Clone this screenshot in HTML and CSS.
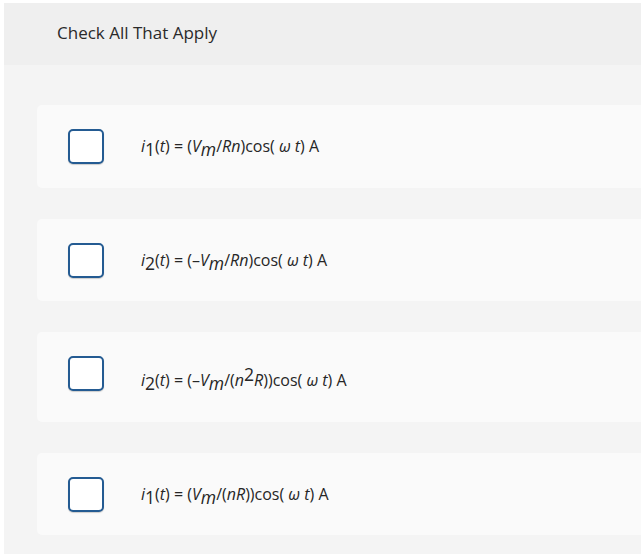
FILE: index.html
```html
<!DOCTYPE html>
<html lang="en">
<head>
<meta charset="utf-8">
<title>Check All That Apply</title>
<link rel="stylesheet" href="styles.css">
</head>
<body>
<div class="question">
  <div class="prompt">Check All That Apply</div>
  <div class="choices">
    <label class="choice">
      <span class="box"></span>
      <span class="expr"><i>i</i><span class="sub">1</span>(<i>t</i>) = (<i>V</i><span class="sub"><i>m</i></span>/<i>Rn</i>)cos( <i>ω</i> <i>t</i>) A</span>
    </label>
    <label class="choice">
      <span class="box"></span>
      <span class="expr"><i>i</i><span class="sub">2</span>(<i>t</i>) = (–<i>V</i><span class="sub"><i>m</i></span>/<i>Rn</i>)cos( <i>ω</i> <i>t</i>) A</span>
    </label>
    <label class="choice">
      <span class="box"></span>
      <span class="expr"><i>i</i><span class="sub">2</span>(<i>t</i>) = (–<i>V</i><span class="sub"><i>m</i></span>/(<i>n</i><span class="sup">2</span><i>R</i>))cos( <i>ω</i> <i>t</i>) A</span>
    </label>
    <label class="choice">
      <span class="box"></span>
      <span class="expr"><i>i</i><span class="sub">1</span>(<i>t</i>) = (<i>V</i><span class="sub"><i>m</i></span>/(<i>nR</i>))cos( <i>ω</i> <i>t</i>) A</span>
    </label>
  </div>
</div>
</body>
</html>
```

FILE: styles.css
```css
html, body {
  margin: 0;
  padding: 0;
  background: #ffffff;
}

body {
  font-family: "Open Sans", Lato, "Liberation Sans", sans-serif;
  color: #2b2b2b;
  overflow: hidden;
}

.question {
  margin: 3px 0 0 4px;
  background: #f4f4f4;
  min-height: 560px;
}

.prompt {
  background: #efefef;
  height: 62px;
  box-sizing: border-box;
  padding: 20px 0 0 53px;
  font-size: 17px;
  line-height: 20px;
  color: #2a2a2a;
}

.choices {
  display: flex;
  flex-direction: column;
  gap: 31px;
  padding: 40px 0 0 33px;
}

.choice {
  display: flex;
  align-items: flex-start;
  gap: 37px;
  background: #fafafa;
  border-radius: 5px 0 0 5px;
  padding: 24px 0 23.5px 31px;
}

.box {
  flex: none;
  width: 36px;
  height: 35px;
  box-sizing: border-box;
  border: 2.5px solid #245b92;
  border-radius: 5px;
  background: #ffffff;
  box-shadow: 0 1px 1px rgba(0, 0, 0, 0.18);
}

.expr {
  display: block;
  font-size: 16px;
  line-height: 35px;
  white-space: nowrap;
  color: #262626;
}

.expr i {
  font-style: italic;
}

.sub {
  font-size: 1.1em;
  vertical-align: -4px;
  line-height: 10px;
}

.sup {
  font-size: 1.1em;
  vertical-align: 5px;
  line-height: 36px;
}
```
